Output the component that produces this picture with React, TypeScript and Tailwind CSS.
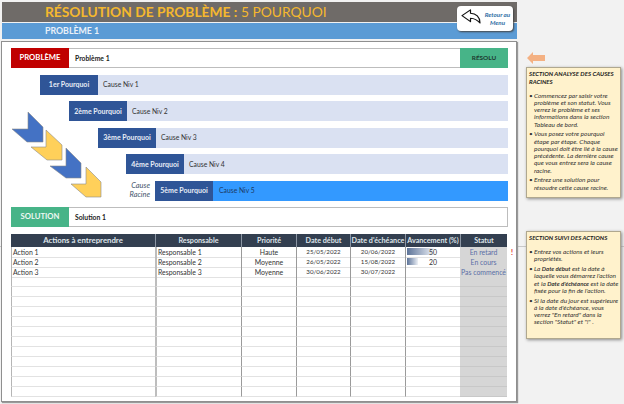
const causes = [
  { label: "1er Pourquoi", text: "Cause Niv 1", indent: "ml-[29px]" },
  { label: "2ème Pourquoi", text: "Cause Niv 2", indent: "ml-[58px]" },
  { label: "3ème Pourquoi", text: "Cause Niv 3", indent: "ml-[87px]" },
  { label: "4ème Pourquoi", text: "Cause Niv 4", indent: "ml-[115px]" },
];

const actions = [
  { action: "Action 1", owner: "Responsable 1", priority: "Haute", start: "25/05/2022", end: "20/06/2022", progress: 50, status: "En retard" },
  { action: "Action 2", owner: "Responsable 2", priority: "Moyenne", start: "26/05/2022", end: "15/08/2022", progress: 20, status: "En cours" },
  { action: "Action 3", owner: "Responsable 3", priority: "Moyenne", start: "30/06/2022", end: "30/07/2022", progress: null, status: "Pas commencé" },
];

const rows = Array.from({ length: 15 }, (_, i) => actions[i] ?? null);
const headers = ["Actions à entreprendre", "Responsable", "Priorité", "Date début", "Date d'échéance", "Avancement (%)", "Statut"];
const gridCols = "grid grid-cols-[144px_86px_55px_54px_55px_55px_47px]";

function Chevrons() {
  return (
    <svg className="absolute left-0 top-0" width="110" height="205" viewBox="2 42 110 205">
      <g stroke="#8a8a8a" strokeWidth="0.6" strokeLinejoin="round">
        <path d="M12 129 H28 V112 L43 127 V142 H27 Z" fill="#4472c4" />
        <path d="M31 147 H46 V130 L62 145 V160 H47 Z" fill="#ffd05a" />
        <path d="M50 166 H66 V148 L81 163 V178 H66 Z" fill="#4472c4" />
        <path d="M71 184 H86 V167 L101 182 V197 H86 Z" fill="#ffd05a" />
      </g>
    </svg>
  );
}

function BackIcon() {
  return (
    <svg width="20" height="15" viewBox="0 0 20 17" preserveAspectRatio="none" className="shrink-0 -mt-[4px]">
      <path
        d="M1 7.5 L9.5 1 V4.8 C15 5 19 9 19 15.8 C16.5 12.5 13.5 10.6 9.5 10.4 V14.4 Z"
        fill="white"
        stroke="#111"
        strokeWidth="1.2"
        strokeLinejoin="round"
      />
    </svg>
  );
}

function Note({ title, className, children }: { title: string; className: string; children: React.ReactNode }) {
  return (
    <div className={`w-[95px] bg-[#fff2cc] border border-[#b0a88f] shadow-[1px_1px_3px_#888] pl-[2px] pr-px pt-[2px] italic text-[6.5px] leading-[7.25px] text-[#333] ${className}`}>
      <div className="font-bold text-[6.1px] leading-[7.6px] text-[#222] mb-[6.5px]">{title}</div>
      <ul className="flex flex-col gap-[2.5px]">{children}</ul>
    </div>
  );
}

function Bullet({ children }: { children: React.ReactNode }) {
  return (
    <li className="flex">
      <span className="w-[5px] shrink-0 not-italic">•</span>
      <span>{children}</span>
    </li>
  );
}

export default function App() {
  return (
    <div className="relative w-[624px] h-[404px] overflow-hidden bg-[#f2f2f2] font-['Lato',sans-serif] flex">
      <div className="absolute left-0 right-0 top-[246px] h-px bg-[#c8c8c8]" />
      <div className="relative w-[515px] ml-[2px] pt-[2px] shrink-0">
        <div className="h-[20px] bg-[#6f6b68] pl-[43px] text-[#f5b82e] text-[13.8px] leading-[20px] whitespace-nowrap">
          <span className="font-bold">RÉSOLUTION DE PROBLÈME :</span> <span>5 POURQUOI</span>
        </div>
        <div className="h-[16px] mt-px bg-[#5b9bd5] pl-[43px] text-[#eaf1f8] font-bold text-[8.8px] leading-[15px]">PROBLÈME 1</div>

        <div className="absolute left-[455px] top-[6px] w-[56px] h-[25px] bg-white rounded-[4px] shadow-[1px_1px_2px_#444] flex items-center pl-[4px] gap-[1px]">
          <BackIcon />
          <div className="flex-1 text-center italic font-bold text-[6.2px] leading-[8px] text-[#2e6da4] whitespace-nowrap">
            Retour au<br />Menu
          </div>
        </div>

        <div className="relative h-[361px] mt-[2px] -ml-px w-[516px] bg-white border border-[#8f8f8f] shadow-[1px_1px_1px_#999] pl-[9px] pt-[6px] pr-[8px]">
          <Chevrons />
          <div className="relative flex flex-col gap-[6.5px]">
            <div className="flex h-[20px] items-stretch">
              <div className="w-[58px] bg-[#c00000] text-white font-bold text-[7.7px] flex items-center justify-center">PROBLÈME</div>
              <div className="flex-1 border-y border-[#bdbdbd] pl-[6px] flex items-center text-[6.8px] font-bold text-[#222]">Problème 1</div>
              <div className="w-[48px] bg-[#47b488] text-[#1d3a30] font-bold text-[6.4px] flex items-center justify-center">RÉSOLU</div>
            </div>

            {causes.map((c) => (
              <div key={c.label} className={`flex h-[20px] ${c.indent}`}>
                <div className="w-[58px] bg-[#2f5597] text-[#e8edf6] font-bold text-[7px] flex items-center justify-center whitespace-nowrap">{c.label}</div>
                <div className="flex-1 bg-[#dae1f2] pl-[5px] flex items-center text-[6.8px] text-[#333]">{c.text}</div>
              </div>
            ))}

            <div className="flex h-[20px]">
              <div className="w-[144px] pr-[5px] text-right italic text-[7.4px] leading-[9.5px] text-[#44546a]">Cause<br />Racine</div>
              <div className="w-[58px] bg-[#2f5597] text-[#e8edf6] font-bold text-[7px] flex items-center justify-center whitespace-nowrap">5ème Pourquoi</div>
              <div className="flex-1 bg-[#3399ff] pl-[6px] flex items-center text-[6.8px] text-[#1c3a66]">Cause Niv 5</div>
            </div>

            <div className="flex h-[20px]">
              <div className="w-[58px] bg-[#47b488] text-[#eef8f3] font-bold text-[7.7px] flex items-center justify-center">SOLUTION</div>
              <div className="flex-1 border-y border-r border-[#bdbdbd] pl-[6px] flex items-center text-[6.8px] font-bold text-[#222]">Solution 1</div>
            </div>
          </div>

          <div className="relative mt-[7px] w-[496px]">
            <div className={`${gridCols} h-[13px] bg-[#333f50]`}>
              {headers.map((h) => (
                <div key={h} className="border-l border-[#8b95a3] first:border-l-0 first:text-[7.8px] text-[#dfe4ea] font-bold text-[7.2px] leading-[13px] text-center whitespace-nowrap">{h}</div>
              ))}
            </div>
            {rows.map((r, i) => (
              <div key={i} className={`${gridCols} h-[10px] text-[6.9px] leading-[10px] text-[#333] whitespace-nowrap`}>
                <div className="border-b border-[#e2e2e2] border-l border-l-[#b5b5b5] pl-[1px]">{r?.action}</div>
                <div className="border-b border-[#e2e2e2] border-l-2 border-l-[#bdbdbd] pl-[1px]">{r?.owner}</div>
                <div className="border-b border-[#e2e2e2] border-l border-l-[#9a9a9a] text-center">{r?.priority}</div>
                <div className="border-b border-[#e2e2e2] border-l border-l-[#9a9a9a] text-center text-[6.2px]">{r?.start}</div>
                <div className="border-b border-[#e2e2e2] border-l border-l-[#9a9a9a] text-center text-[6.2px]">{r?.end}</div>
                <div className="relative border-b border-[#e2e2e2] border-l border-l-[#9a9a9a] text-center">
                  {r?.progress != null && (
                    <div
                      className="absolute left-px top-px bottom-[2px] bg-gradient-to-r from-[#5f7599] to-[#eef1f6]"
                      style={{ width: `${r.progress}%` }}
                    />
                  )}
                  <span className="relative">{r?.progress}</span>
                </div>
                <div className="bg-[#d6d6d6] border-b border-[#c8c8c8] text-center text-[#5b6ea6]">{r?.status}</div>
              </div>
            ))}
            <div className="absolute left-[500px] top-[13px] text-[#e02020] font-bold text-[7px] leading-[10px]">!</div>
          </div>
        </div>
      </div>

      <div className="relative ml-[9px] flex flex-col items-start">
        <svg className="mt-[52px] ml-px" width="18" height="12" viewBox="0 0 18 12">
          <path d="M0 6 L6 0 V3 H18 V9 H6 V12 Z" fill="#f4b183" />
        </svg>
        <Note title="SECTION ANALYSE DES CAUSES RACINES" className="mt-[3px] h-[131px]">
          <Bullet>Commencez par saisir votre problème et son statut. Vous verrez le problème et ses informations dans la section Tableau de bord.</Bullet>
          <Bullet>Vous posez votre pourquoi étape par étape. Chaque pourquoi doit être lié à la cause précédente. La dernière cause que vous entrez sera la cause racine.</Bullet>
          <Bullet>Entrez une solution pour résoudre cette cause racine.</Bullet>
        </Note>
        <Note title="SECTION SUIVI DES ACTIONS" className="mt-[33px] h-[108px]">
          <Bullet>Entrez vos actions et leurs propriétés.</Bullet>
          <Bullet>La <span className="font-bold text-[6px]">Date début</span> est la date à laquelle vous démarrez l'action et la <span className="font-bold text-[6px]">Date d'échéance</span> est la date fixée pour la fin de l'action.</Bullet>
          <Bullet>Si la date du jour est supérieure à la date d'échéance, vous verrez "En retard" dans la section "Statut" et  "!" .</Bullet>
        </Note>
      </div>
    </div>
  );
}
